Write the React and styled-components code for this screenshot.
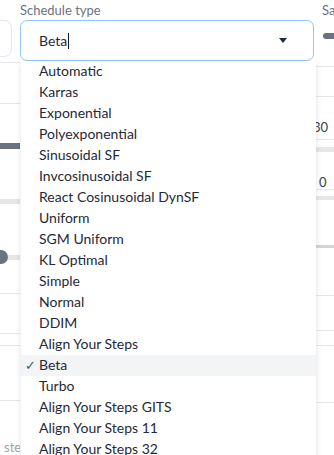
import React from "react";
import styled, { createGlobalStyle } from "styled-components";

const GlobalStyle = createGlobalStyle`
  html, body {
    margin: 0;
    padding: 0;
    background: #ffffff;
    overflow: hidden;
  }
  body {
    font-family: "Lato", "Noto Sans", sans-serif;
    color: #1f2937;
  }
`;

const Page = styled.div`
  position: relative;
  display: grid;
  grid-template-columns: 20px 294px 1fr;
  width: 334px;
  height: 455px;
  overflow: hidden;
`;

const SideColumn = styled.div`
  display: flex;
  flex-direction: column;
  overflow: hidden;
`;

const SideBox = styled.div`
  width: 12px;
  height: 40px;
  margin-top: 20px;
  border: 1px solid #e5e7eb;
  border-left: none;
  border-radius: 0 8px 8px 0;
  box-sizing: border-box;
`;

const Rule = styled.div`
  height: ${({ h }) => h || 1}px;
  margin-top: ${({ gap }) => gap}px;
  background: ${({ tone }) => tone || "#e5e7eb"};
  flex-shrink: 0;
`;

const ThumbRow = styled.div`
  display: flex;
  align-items: center;
  height: 14px;
  margin-top: ${({ gap }) => gap}px;
`;

const Thumb = styled.div`
  width: 14px;
  height: 14px;
  margin-left: -6px;
  border-radius: 50%;
  background: #6b7280;
  flex-shrink: 0;
`;

const ThumbTrack = styled.div`
  flex: 1;
  height: 5px;
  background: #e5e7eb;
`;

const Faint = styled.div`
  margin-top: ${({ gap }) => gap}px;
  margin-left: ${({ indent }) => indent || 0}px;
  font-size: 13px;
  line-height: 16px;
  color: ${({ strong }) => (strong ? "#374151" : "#9ca3af")};
  white-space: nowrap;
`;

const SideLabel = styled.div`
  height: 20px;
  font-size: 13px;
  line-height: 20px;
  color: #6b7280;
  padding-left: 8px;
  white-space: nowrap;
`;

const Toggle = styled.div`
  width: 20px;
  height: 6px;
  margin: 13px 0 0 9px;
  border-radius: 3px;
  background: #6b7280;
`;

const Field = styled.div`
  display: flex;
  flex-direction: column;
`;

const Label = styled.div`
  height: 20px;
  font-size: 13px;
  line-height: 20px;
  color: #6b7280;
`;

const SelectBox = styled.div`
  display: flex;
  align-items: center;
  height: 41px;
  padding: 0 26px 0 18px;
  border: 1px solid #93c5fd;
  border-radius: 7px;
  box-sizing: border-box;
  font-size: 14px;
  color: #1f2937;
`;

const Caret = styled.span`
  display: inline-block;
  width: 1px;
  height: 16px;
  margin-left: 1px;
  background: #111827;
`;

const Arrow = styled.svg`
  margin-left: auto;
  width: 8px;
  height: 5px;
`;

const Menu = styled.ul`
  position: absolute;
  left: 21px;
  top: 61px;
  width: 295px;
  margin: 0;
  padding: 0;
  list-style: none;
  background: #ffffff;
  box-shadow: 0 2px 6px rgba(0, 0, 0, 0.12);
`;

const Item = styled.li`
  position: relative;
  height: 21px;
  line-height: 20px;
  padding-left: 18px;
  font-size: 14px;
  color: #1f2937;
  background: ${({ selected }) => (selected ? "#f3f4f6" : "transparent")};
  white-space: nowrap;
`;

const Check = styled.span`
  position: absolute;
  left: 4px;
  top: 0;
  font-size: 13px;
  color: #4b5563;
`;

const options = [
  "Automatic",
  "Karras",
  "Exponential",
  "Polyexponential",
  "Sinusoidal SF",
  "Invcosinusoidal SF",
  "React Cosinusoidal DynSF",
  "Uniform",
  "SGM Uniform",
  "KL Optimal",
  "Simple",
  "Normal",
  "DDIM",
  "Align Your Steps",
  "Beta",
  "Turbo",
  "Align Your Steps GITS",
  "Align Your Steps 11",
  "Align Your Steps 32",
];

const selected = "Beta";

export default function App() {
  return (
    <>
      <GlobalStyle />
      <Page>
        <SideColumn>
          <SideBox />
          <Rule gap={5} />
          <Rule gap={40} />
          <Rule gap={39} h={6} tone="#6b7280" />
          <Rule gap={50} h={5} />
          <ThumbRow gap={46}>
            <Thumb />
            <ThumbTrack />
          </ThumbRow>
          <Rule gap={29} />
          <Rule gap={39} />
          <Rule gap={11} />
          <Rule gap={54} />
          <Faint gap={38} indent={4}>ste</Faint>
        </SideColumn>

        <Field>
          <Label>Schedule type</Label>
          <SelectBox>
            Beta
            <Caret />
            <Arrow viewBox="0 0 8 5">
              <path d="M0 0 L8 0 L4 5 Z" fill="#1f2937" />
            </Arrow>
          </SelectBox>
        </Field>

        <SideColumn>
          <SideLabel>Sa</SideLabel>
          <Toggle />
          <Rule gap={27} />
          <Rule gap={29} />
          <Faint gap={22} indent={-1} strong>30</Faint>
          <Rule gap={4} />
          <Rule gap={7} h={5} />
          <Faint gap={22} indent={5} strong>0</Faint>
          <Rule gap={-1} />
          <Rule gap={6} h={4} />
          <Rule gap={45} h={3} tone="#d1d5db" />
          <Rule gap={47} />
          <Rule gap={34} />
          <Rule gap={14} />
          <Rule gap={56} />
        </SideColumn>

        <Menu>
          {options.map((opt) => (
            <Item key={opt} selected={opt === selected}>
              {opt === selected && <Check>✓</Check>}
              {opt}
            </Item>
          ))}
        </Menu>
      </Page>
    </>
  );
}
